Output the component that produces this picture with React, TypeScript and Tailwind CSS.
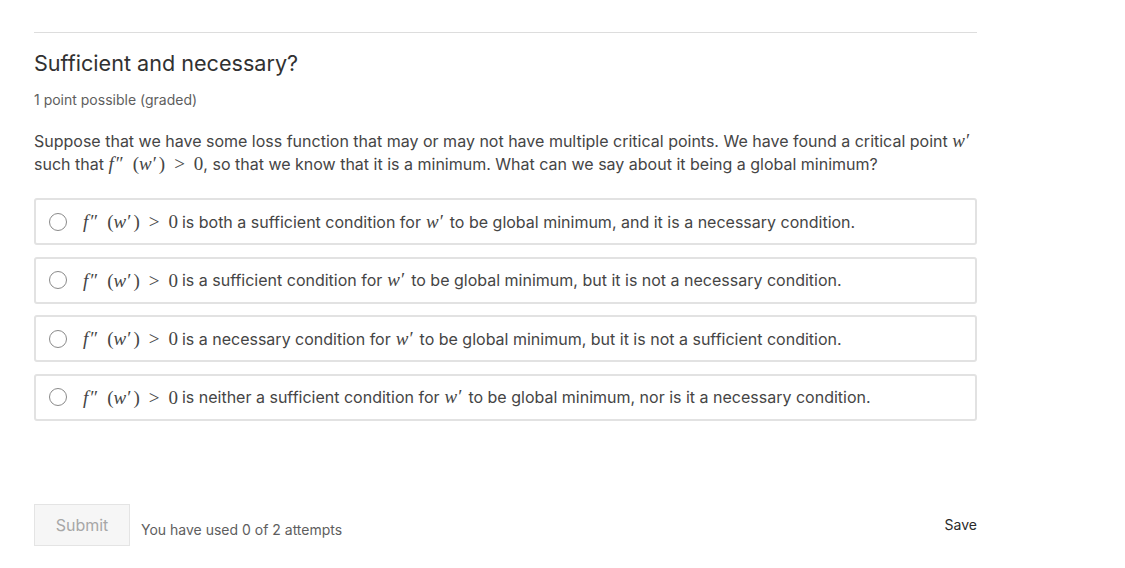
import React from "react";

const Prime = () => <span className="ml-[1px]">′</span>;

const FPrime = () => (
  <span className="font-['Liberation_Serif',serif] text-[19px] leading-none whitespace-nowrap">
    <i>f</i>
    <span className="ml-[2px]">″</span>
    <span className="ml-[9px]">(</span>
    <i>w</i>
    <Prime />
    <span className="ml-[2px]">)</span>
    <span className="mx-[9px]">&gt;</span>
    <span>0</span>
  </span>
);

const W = () => (
  <span className="font-['Liberation_Serif',serif] text-[19px] leading-none">
    <i>w</i>
    <Prime />
  </span>
);

const OPTIONS = [
  ["is both a sufficient condition for", "to be global minimum, and it is a necessary condition."],
  ["is a sufficient condition for", "to be global minimum, but it is not a necessary condition."],
  ["is a necessary condition for", "to be global minimum, but it is not a sufficient condition."],
  ["is neither a sufficient condition for", "to be global minimum, nor is it a necessary condition."],
];

export default function App() {
  return (
    <div className="min-h-[568px] bg-white font-['Inter',sans-serif] text-[#454545]">
      <div className="ml-[34px] w-[943px] pt-8">
        <div className="border-t border-[#dddddd]" />
        <h2 className="mt-[15px] text-[21.6px] leading-[30px] text-[#313131]">Sufficient and necessary?</h2>
        <div className="mt-[12px] text-[14px] leading-[20px] text-[#5e5e5e]">1 point possible (graded)</div>
        <p className="mt-[20px] text-[16px] leading-[23px]">
          Suppose that we have some loss function that may or may not have multiple critical points. We have found a critical point <W />
          <br />
          such that <FPrime />, so that we know that it is a minimum. What can we say about it being a global minimum?
        </p>
        <div className="mt-[22px] flex flex-col gap-[11.6px]">
          {OPTIONS.map(([a, b], i) => (
            <label
              key={i}
              className="flex h-[47px] items-center rounded-[3px] border-2 border-[#e2e2e2] pl-[13px] text-[16px]"
            >
              <span className="h-[18px] w-[18px] shrink-0 rounded-full border border-[#8a8a8a] bg-white" />
              <span className="ml-[16px] flex items-center whitespace-nowrap">
                <FPrime />
                <span className="ml-[4px]">{a}</span>
                <span className="ml-[5px]"><W /></span>
                <span className="ml-[6px]">{b}</span>
              </span>
            </label>
          ))}
        </div>
        <div className="mt-[83px] flex items-start">
          <button className="h-[42px] w-[96px] border border-[#e4e4e4] bg-[#f6f6f6] text-[16px] text-[#a7a7a7]">
            Submit
          </button>
          <span className="ml-[11px] mt-[16px] text-[14px] leading-[20px] text-[#5e5e5e]">You have used 0 of 2 attempts</span>
          <span className="ml-auto mt-[11px] text-[14px] leading-[20px] text-[#2a2a2a]">Save</span>
        </div>
      </div>
    </div>
  );
}
